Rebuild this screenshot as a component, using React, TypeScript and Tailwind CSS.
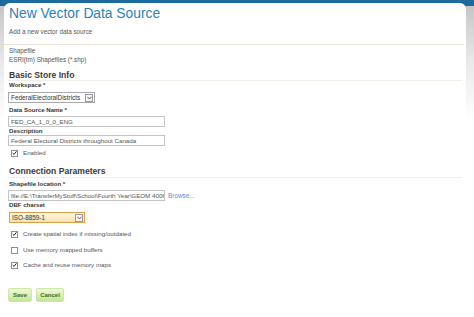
import React from "react";

const font = { fontFamily: '"Liberation Sans", Arial, sans-serif' };

function Check({ checked }: { checked: boolean }) {
  return (
    <span className="flex h-[7px] w-[7px] items-center justify-center border border-[#8f8f8f] bg-white">
      {checked && (
        <svg width="6" height="6" viewBox="0 0 6 6">
          <path d="M0.8 3.1 L2.4 4.7 L5.3 1" fill="none" stroke="#222" strokeWidth="1.2" />
        </svg>
      )}
    </span>
  );
}

function CheckRow({ checked, label, className }: { checked: boolean; label: string; className: string }) {
  return (
    <div className={"flex h-[8px] items-center pl-[3px] " + className}>
      <Check checked={checked} />
      <span className="ml-[5px] text-[6.2px] leading-[8px] text-[#555]">{label}</span>
    </div>
  );
}

function Label({ text, className }: { text: string; className: string }) {
  return <div className={"h-[8px] pl-[1px] text-[6.1px] font-bold leading-[8px] text-[#333] " + className}>{text}</div>;
}

function Heading({ text, className }: { text: string; className: string }) {
  return (
    <div className={"mr-[4px] border-b border-[#f0eee6] pl-[1px] text-[8.6px] font-bold text-[#3a3a3a] " + className}>
      {text}
    </div>
  );
}

function Arrow() {
  return (
    <span className="flex h-[8px] w-[8px] items-center justify-center border border-[#9a9a9a] bg-[#f4f4f4]">
      <svg width="5" height="4" viewBox="0 0 5 4">
        <path d="M0.5 0.8 L2.5 3 L4.5 0.8" fill="none" stroke="#555" strokeWidth="0.9" />
      </svg>
    </span>
  );
}

export default function App() {
  return (
    <div
      style={font}
      className="flex h-[317px] w-[474px] flex-col overflow-hidden bg-[linear-gradient(180deg,#1d6b9c_0px,#1d6b9c_6px,#c6c6c6_6px,#e8e8e8_60px,#ffffff_120px)]"
    >
      <div className="ml-[4px] mt-[3px] flex w-[462px] flex-1 flex-col rounded-t-[6px] bg-white">
        <div className="mt-[3px] h-[16px] pl-[5px] text-[13.8px] leading-[16px] text-[#2c82b6]">New Vector Data Source</div>
        <div className="mt-[6px] h-[8px] pl-[5px] text-[6.3px] leading-[8px] text-[#555]">Add a new vector data source</div>
        <div className="mr-[2px] mt-[8px] h-px bg-[#e6e3d6]" />
        <div className="mt-[1px] h-[9px] pl-[5px] text-[6.3px] leading-[9px] text-[#555]">Shapefile</div>
        <div className="h-[9px] pl-[5px] text-[6.3px] leading-[9px] text-[#555]">ESRI(tm) Shapefiles (*.shp)</div>

        <div className="flex flex-col pl-[4px]">
          <Heading text="Basic Store Info" className="mt-[6px] h-[11px] leading-[10px]" />
          <Label text="Workspace *" className="mt-0" />
          <div className="mt-[3px] flex h-[11px] w-[87px] items-center justify-between border border-[#a8a8a8] bg-white pl-[2px] pr-[1px]">
            <span className="text-[6.4px] text-[#333]">FederalElectoralDistricts</span>
            <Arrow />
          </div>
          <Label text="Data Source Name *" className="mt-[3px]" />
          <div className="mt-[2px] flex h-[11px] w-[157px] items-center border border-[#c4c4c4] pl-[2px] text-[6.2px] text-[#555]">
            FED_CA_1_0_0_ENG
          </div>
          <Label text="Description" className="mt-0" />
          <div className="flex h-[11px] w-[157px] items-center border border-[#c4c4c4] pl-[2px] text-[6.2px] text-[#555]">
            Federal Electoral Districts throughout Canada
          </div>
          <CheckRow checked label="Enabled" className="mt-[3px]" />

          <Heading text="Connection Parameters" className="mt-[8px] h-[13px] leading-[12px]" />
          <Label text="Shapefile location *" className="mt-[2px]" />
          <div className="mt-[2px] flex h-[11px] items-center">
            <div className="flex h-[11px] w-[157px] items-center overflow-hidden whitespace-nowrap border border-[#c4c4c4] pl-[2px] text-[6.2px] text-[#555]">
              file://E:\TransferMyStuff\School\Fourth Year\GEOM 4006
            </div>
            <span className="ml-[3px] text-[6.4px] text-[#5a8fd4]">Browse...</span>
          </div>
          <Label text="DBF charset" className="mt-0" />
          <div className="ml-px mt-[3px] flex h-[11px] w-[76px] items-center justify-between border border-[#d9a24a] bg-[linear-gradient(180deg,#fff6e2,#fbe2ae)] pl-[2px] pr-[1px]">
            <span className="text-[6.4px] text-[#333]">ISO-8859-1</span>
            <Arrow />
          </div>
          <CheckRow checked label="Create spatial index if missing/outdated" className="mt-[7px]" />
          <CheckRow checked={false} label="Use memory mapped buffers" className="mt-[8px]" />
          <CheckRow checked label="Cache and reuse memory maps" className="mt-[7px]" />

          <div className="mt-[19px] flex gap-[4px]">
            <button className="flex h-[14px] w-[24px] items-center justify-center rounded-[2px] border border-[#cfe6a8] bg-[linear-gradient(180deg,#eef9d6,#c4e597)] text-[6px] font-bold text-[#3c6b2a]">
              Save
            </button>
            <button className="flex h-[14px] w-[28px] items-center justify-center rounded-[2px] border border-[#cfe6a8] bg-[linear-gradient(180deg,#eef9d6,#c4e597)] text-[6px] font-bold text-[#3c6b2a]">
              Cancel
            </button>
          </div>
        </div>
      </div>
    </div>
  );
}
